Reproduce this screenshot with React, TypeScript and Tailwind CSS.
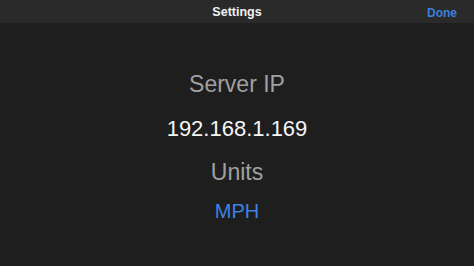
import React from "react";

export default function App() {
  return (
    <div
      className="w-[474px] h-[266px] bg-[#1e1e1e] flex flex-col"
      style={{ fontFamily: '"Liberation Sans", Arial, sans-serif' }}
    >
      <div className="h-[23px] bg-[#2a2a2a] grid grid-cols-[1fr_auto_1fr] items-center pl-[17px] pr-[17px]">
        <div />
        <div className="text-[12.5px] leading-[16px] font-semibold text-[#f2f2f2] pt-[1px]">Settings</div>
        <div className="flex justify-end">
          <span className="text-[12px] leading-[16px] font-semibold text-[#3d7fdc] pt-[2px]">Done</span>
        </div>
      </div>
      <div className="flex flex-col items-center pt-[47px]">
        <div className="text-[23px] leading-[28px] text-[#a0a0a0]">Server IP</div>
        <div className="mt-[17px] text-[22px] leading-[28px] text-[#f5f5f5]">192.168.1.169</div>
        <div className="mt-[15px] text-[23px] leading-[28px] text-[#a0a0a0]">Units</div>
        <div className="mt-[13px] text-[20px] leading-[24px] text-[#3d82e3]">MPH</div>
      </div>
    </div>
  );
}
